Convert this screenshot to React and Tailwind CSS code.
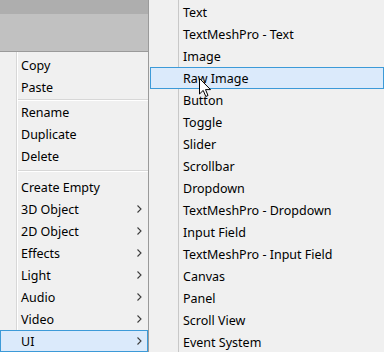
import React from 'react';

const leftTop = ['Copy', 'Paste'];
const leftMid = ['Rename', 'Duplicate', 'Delete'];
const leftBottom = [
  { label: 'Create Empty' },
  { label: '3D Object', sub: true },
  { label: '2D Object', sub: true },
  { label: 'Effects', sub: true },
  { label: 'Light', sub: true },
  { label: 'Audio', sub: true },
  { label: 'Video', sub: true },
  { label: 'UI', sub: true, active: true },
];

const uiItems = [
  'Text',
  'TextMeshPro - Text',
  'Image',
  'Raw Image',
  'Button',
  'Toggle',
  'Slider',
  'Scrollbar',
  'Dropdown',
  'TextMeshPro - Dropdown',
  'Input Field',
  'TextMeshPro - Input Field',
  'Canvas',
  'Panel',
  'Scroll View',
  'Event System',
];

function Chevron() {
  return (
    <svg width="5" height="8" viewBox="0 0 5 8" className="shrink-0">
      <polyline points="0.5,0.5 4,4 0.5,7.5" fill="none" stroke="#3c3c3c" strokeWidth="1.1" />
    </svg>
  );
}

function Row({ label, sub, active }) {
  return (
    <div
      className={
        'relative z-10 flex h-[22px] items-center border pl-[20px] pr-[5px] ' +
        (active ? 'border-[#3c9ad8] bg-[#dbeafb]' : 'border-transparent')
      }
    >
      <span className="relative top-[1px] flex-1 whitespace-nowrap">{label}</span>
      {sub && <Chevron />}
    </div>
  );
}

function Separator({ className = '' }) {
  return (
    <div className={'ml-[17px] ' + className}>
      <div className="h-px bg-[#d7d7d7]" />
      <div className="h-px bg-white" />
    </div>
  );
}

export default function App() {
  return (
    <div
      className="relative flex h-[352px] w-[384px] overflow-hidden bg-[#f0f0f0] text-[12.5px] text-black"
      style={{ fontFamily: '"Noto Sans", "Liberation Sans", sans-serif' }}
    >
      {/* left context menu */}
      <div className="flex w-[148px] shrink-0 flex-col">
        <div className="h-[14px] bg-[#aeaeae]" />
        <div className="h-[38px] border-b border-[#9a9a9a] bg-[#c1c1c1]" />
        <div className="relative flex-1 pt-[2px]">
          <div className="absolute bottom-0 left-[16px] top-0 w-px bg-[#d7d7d7]" />
          <div className="absolute bottom-0 left-[17px] top-0 w-px bg-white" />
          {leftTop.map((l) => (
            <Row key={l} label={l} />
          ))}
          <Separator className="pt-[1px]" />
          {leftMid.map((l) => (
            <Row key={l} label={l} />
          ))}
          <Separator className="pt-[3px] pb-[4px]" />
          {leftBottom.map((it) => (
            <Row key={it.label} {...it} />
          ))}
        </div>
      </div>

      {/* UI submenu */}
      <div className="relative flex-1 border-l border-[#9a9a9a] pl-px pt-px">
        <div className="absolute bottom-0 left-[29px] top-0 w-px bg-[#c8c8c8]" />
        {uiItems.map((l) => (
          <div
            key={l}
            className={
              'relative z-10 flex h-[22px] items-center border pl-[32px] ' +
              (l === 'Raw Image' ? 'border-[#3c9ad8] bg-[#dbeafb]' : 'border-transparent')
            }
          >
            <span className="relative top-[1px] whitespace-nowrap">{l}</span>
          </div>
        ))}
      </div>

      {/* mouse pointer */}
      <svg
        width="13"
        height="20"
        viewBox="0 0 13 20"
        className="absolute left-[199px] top-[78px] z-20"
      >
        <path
          d="M0.5 0.5 L0.5 16 L4.2 12.4 L6.8 18.5 L9 17.5 L6.5 11.6 L11.5 11.6 Z"
          fill="white"
          stroke="black"
          strokeWidth="1"
          strokeLinejoin="miter"
        />
      </svg>
    </div>
  );
}
